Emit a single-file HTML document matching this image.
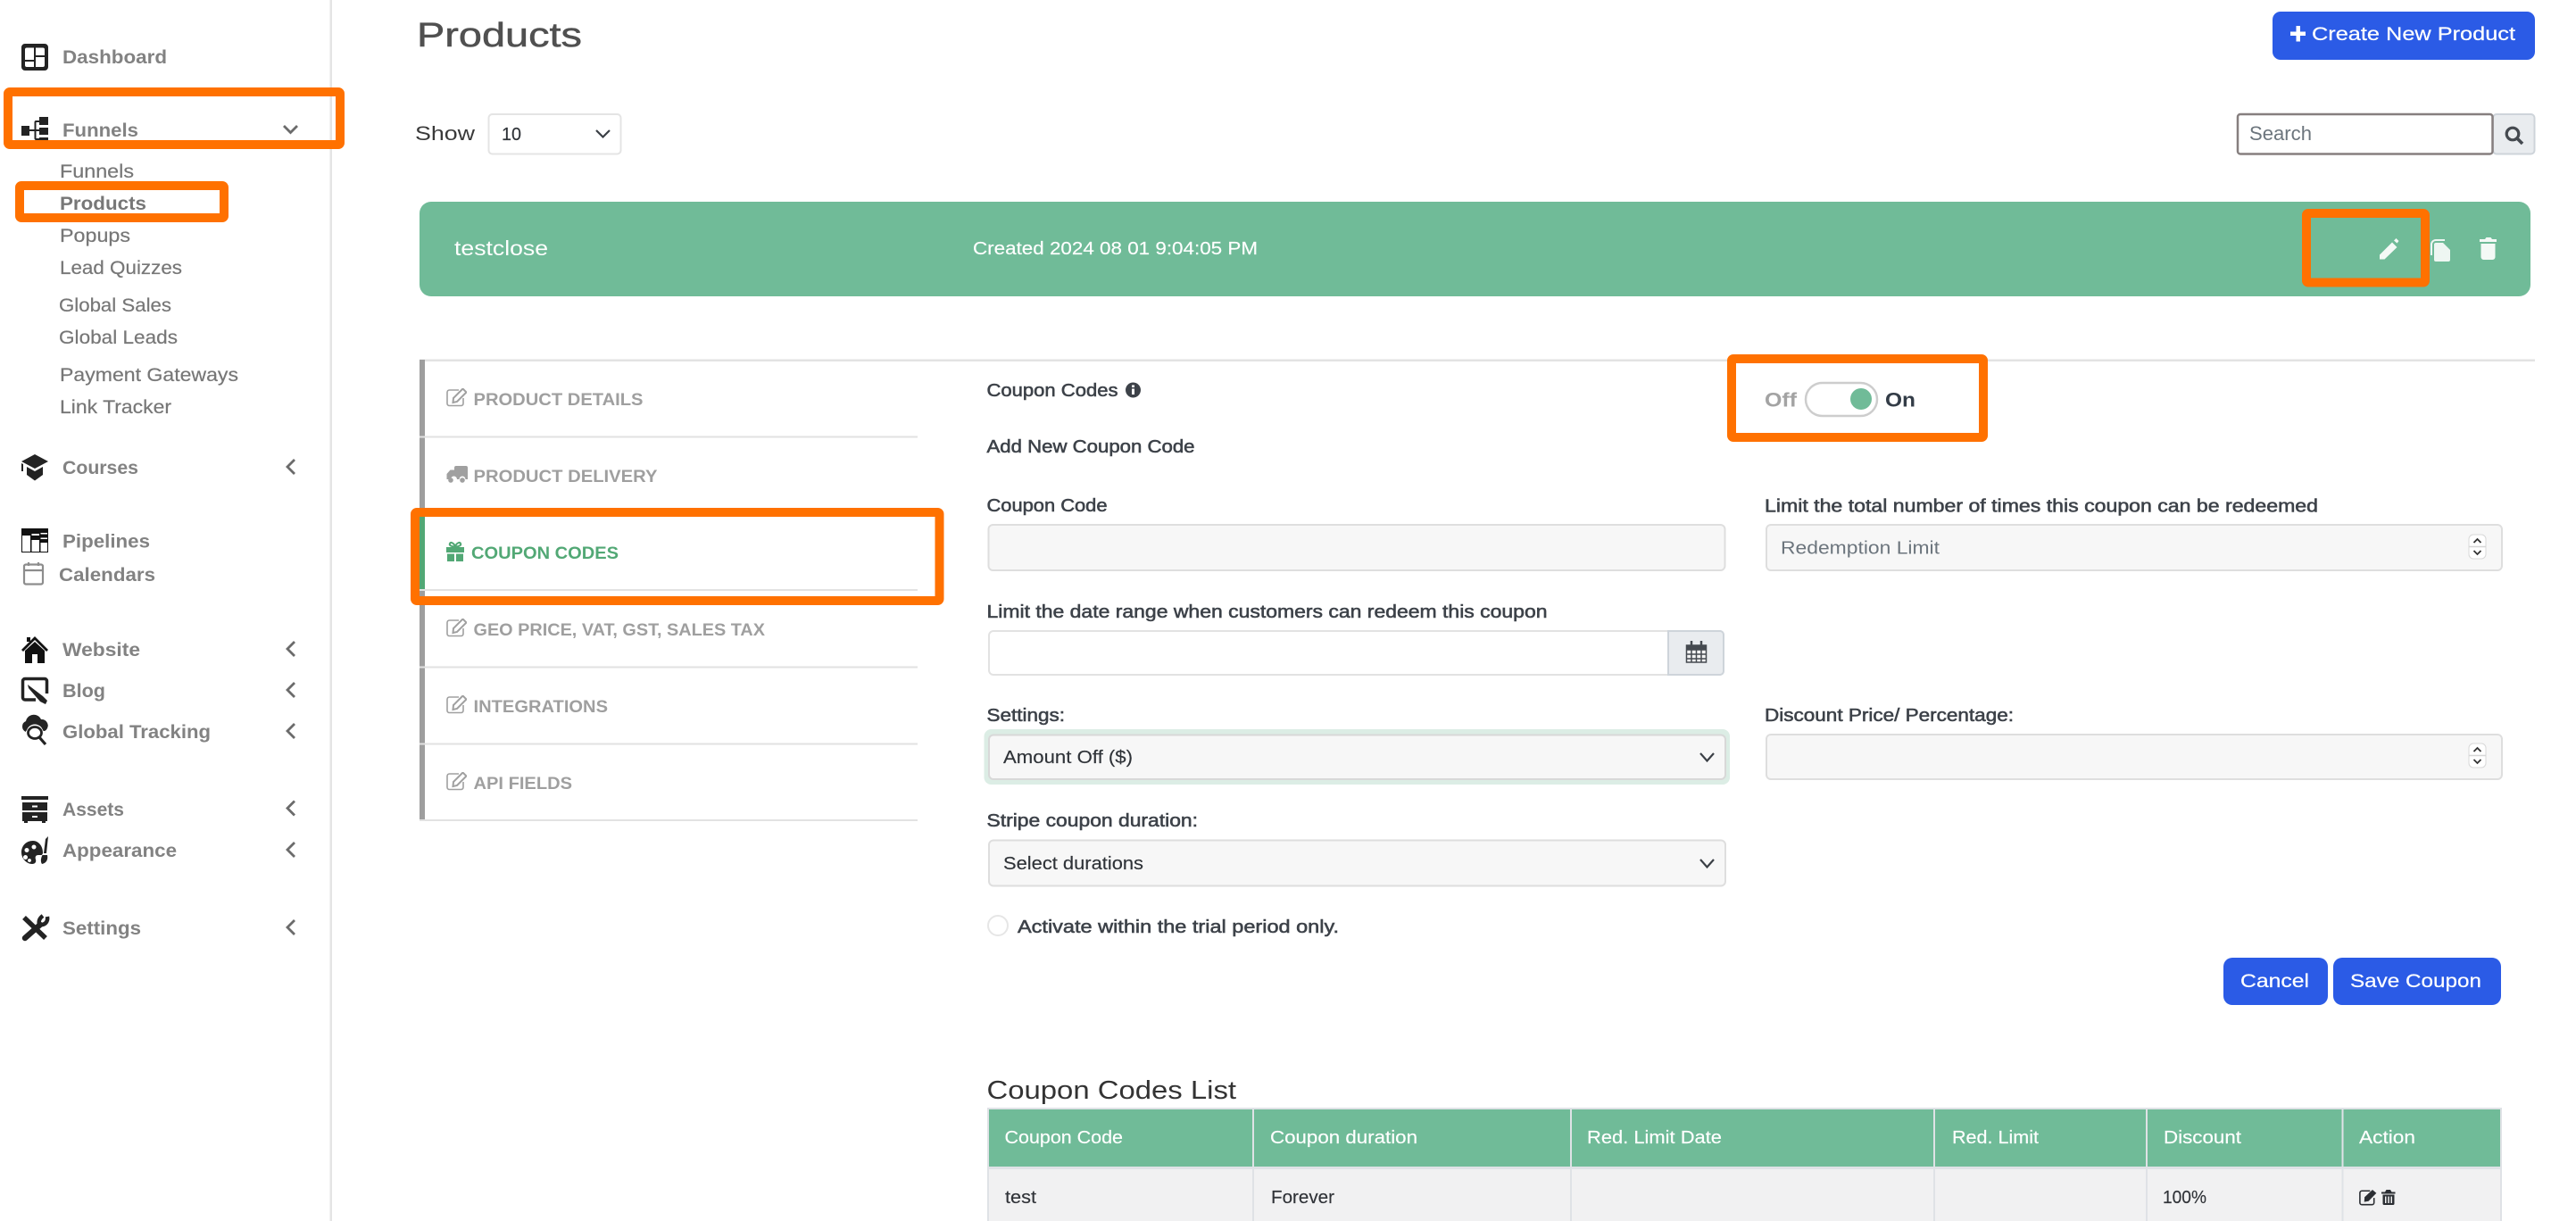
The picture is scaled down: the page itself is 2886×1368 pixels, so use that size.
<!DOCTYPE html>
<html lang="en">
<head>
<meta charset="utf-8">
<title>Products</title>
<style>
html,body{margin:0;padding:0;background:#fff;width:2886px;height:1368px;overflow:hidden}
svg{display:block;position:absolute;left:0;top:0}
text{font-family:"Liberation Sans",Arial,sans-serif;white-space:pre}
.nav{font-size:21px;font-weight:700;fill:#828282}
.sub{font-size:21px;fill:#777;stroke:#777;stroke-width:.2px}
.subb{font-size:21px;font-weight:700;fill:#777}
.tab{font-size:19px;font-weight:700;fill:#9f9f9f}
.lab{font-size:20px;fill:#3d4249;stroke:#3d4249;stroke-width:.55px}
.val{font-size:20px;fill:#2f3338;stroke:#2f3338;stroke-width:.15px}
.wh{font-size:21px;fill:#fff;stroke:#fff;stroke-width:.2px}
.th{font-size:20px;fill:#fff;stroke:#fff;stroke-width:.15px}
.td{font-size:20px;fill:#303338;stroke:#303338;stroke-width:.15px}
</style>
</head>
<body>
<svg width="2886" height="1368" viewBox="0 0 2886 1368" xmlns="http://www.w3.org/2000/svg">
<defs>
<g id="ed">
<path d="M19 11v6a2.500 2.500 0 0 1-2.500 2.500h-13A2.500 2.500 0 0 1 1 17V4.500A2.500 2.500 0 0 1 3.500 2H14" fill="none" stroke="currentColor" stroke-width="1.600"/>
<path d="M8 11 18 1l1 0 3 3v1L12 15l-4.500 1z" fill="none" stroke="currentColor" stroke-width="2"/>
</g>
<g id="edk">
<path d="M19 11v6a2.500 2.500 0 0 1-2.500 2.500h-13A2.500 2.500 0 0 1 1 17V4.500A2.500 2.500 0 0 1 3.500 2H14" fill="none" stroke="currentColor" stroke-width="1.800"/>
<path d="M7 10 17 0.500l5 4.300L12 15l-5.500 1z" fill="currentColor"/>
</g>
<path id="chl" d="M9 0 1 8l8 8" fill="none" stroke="#6b6b6b" stroke-width="2.800"/>
<g id="spin">
<rect x="0" y="0" width="19" height="27" rx="5" fill="#fff" stroke="#d8d8d8"/>
<line x1="0" y1="13.500" x2="19" y2="13.500" stroke="#d6d6d6" stroke-width="1.500"/>
<path d="M5.500 9l4-4 4 4M5.500 18l4 4 4-4" fill="none" stroke="#333" stroke-width="1.800"/>
</g>
</defs>

<!-- sidebar -->
<rect x="369.500" y="0" width="2.500" height="1368" fill="#e4e4e4"/>

<path fill-rule="evenodd" fill="#232323" d="M28 49h22a4 4 0 0 1 4 4v22a4 4 0 0 1-4 4H28a4 4 0 0 1-4-4V53a4 4 0 0 1 4-4zM30 53.500a2 2 0 0 0-2 2V67h10V53.500zM40 53.500V62h10v-6.500a2 2 0 0 0-2-2zM40 64v11h8a2 2 0 0 0 2-2v-9zM28 69v4a2 2 0 0 0 2 2h8v-6z"/>
<text class="nav" x="70" y="71" textLength="117" lengthAdjust="spacingAndGlyphs">Dashboard</text>

<g fill="#232323">
<rect x="24" y="141" width="9" height="11"/>
<rect x="44" y="131" width="10" height="9"/>
<rect x="44" y="143" width="10" height="8"/>
<rect x="44" y="154" width="10" height="6"/>
<path d="M33 145h5.500v-8a2 2 0 0 1 2-2H44v2h-3.500v8H44v2h-3.500v8H44v2h-3.500a2 2 0 0 1-2-2v-8H33z"/>
</g>
<text class="nav" x="70" y="153" textLength="85" lengthAdjust="spacingAndGlyphs">Funnels</text>
<path d="M318 141l7.500 7.500 7.500-7.500" fill="none" stroke="#6b6b6b" stroke-width="2.800"/>

<text class="sub" x="67" y="199" textLength="83" lengthAdjust="spacingAndGlyphs">Funnels</text>
<text class="subb" x="67" y="235" textLength="97" lengthAdjust="spacingAndGlyphs">Products</text>
<text class="sub" x="67" y="271" textLength="79" lengthAdjust="spacingAndGlyphs">Popups</text>
<text class="sub" x="67" y="307" textLength="137" lengthAdjust="spacingAndGlyphs">Lead Quizzes</text>
<text class="sub" x="66" y="349" textLength="126" lengthAdjust="spacingAndGlyphs">Global Sales</text>
<text class="sub" x="66" y="385" textLength="133" lengthAdjust="spacingAndGlyphs">Global Leads</text>
<text class="sub" x="67" y="427" textLength="200" lengthAdjust="spacingAndGlyphs">Payment Gateways</text>
<text class="sub" x="67" y="463" textLength="125" lengthAdjust="spacingAndGlyphs">Link Tracker</text>

<path fill="#232323" d="M39 509l15 8-15 8-15-8zM24 519l2 1v8h-2zM30 523l9 5 9-5v9l-9 6.500-9-6.500z"/>
<text class="nav" x="70" y="531" textLength="85" lengthAdjust="spacingAndGlyphs">Courses</text>
<use href="#chl" x="321" y="515"/>

<g>
<rect x="24.500" y="592.500" width="29" height="26" fill="#fff" stroke="#111" stroke-width="1"/>
<rect x="34" y="592" width="1.500" height="27" fill="#111"/><rect x="44" y="592" width="1.500" height="27" fill="#111"/>
<rect x="25" y="593" width="9" height="7" fill="#111"/><rect x="35.500" y="593" width="8.500" height="5" fill="#111"/><rect x="35.500" y="600" width="8.500" height="5" fill="#111"/>
<rect x="45.500" y="593" width="8" height="4" fill="#111"/><rect x="45.500" y="598.500" width="8" height="4" fill="#111"/><rect x="45.500" y="604" width="8" height="4" fill="#111"/>
</g>
<text class="nav" x="70" y="613.500" textLength="98" lengthAdjust="spacingAndGlyphs">Pipelines</text>

<g fill="none" stroke="#8d8d8d" stroke-width="2.200"><rect x="27" y="632.500" width="21" height="22" rx="2"/><path d="M27 639h21M32 630v4M43 630v4"/></g>
<text class="nav" x="66" y="651" textLength="108" lengthAdjust="spacingAndGlyphs">Calendars</text>

<path fill="#111" d="M39 713l15 15-2 2-13-13-13 13-2-2zM28 729l11-10 11 10v14h-8v-10h-6v10h-8z"/><rect x="30" y="714" width="4" height="5" fill="#111"/>
<text class="nav" x="70" y="735" textLength="87" lengthAdjust="spacingAndGlyphs">Website</text>
<use href="#chl" x="321" y="719"/>

<path fill="none" stroke="#232323" stroke-width="3.500" d="M40 784H28a2.500 2.500 0 0 1-2.500-2.500V763a2.500 2.500 0 0 1 2.500-2.500h22a2.500 2.500 0 0 1 2.500 2.500v14"/>
<path fill="#232323" d="M31 767l17 13 5 5-2 4-6-3-13-15z"/>
<text class="nav" x="70" y="781" textLength="48" lengthAdjust="spacingAndGlyphs">Blog</text>
<use href="#chl" x="321" y="765"/>

<path fill="#232323" d="M29 820a6.500 6.500 0 0 1 0-12 9 9 0 0 1 17-2 7 7 0 0 1 7 10 6 6 0 0 1-3 3l-1 0a13 10 0 0 0-20 0z"/>
<circle cx="39" cy="821" r="9.500" fill="#fff"/>
<ellipse cx="39" cy="821" rx="7.500" ry="6.500" fill="#fff" stroke="#232323" stroke-width="2.800"/>
<path d="M44 826l7 8" stroke="#232323" stroke-width="3.200"/>
<text class="nav" x="70" y="827" textLength="166" lengthAdjust="spacingAndGlyphs">Global Tracking</text>
<use href="#chl" x="321" y="811"/>

<g fill="#232323"><rect x="24" y="892" width="30" height="4"/>
<path fill-rule="evenodd" d="M25 899h28v9H25zM36 902.500v2h6v-2zM25 910h28v10h-2v2h-4v-2H31v2h-4v-2h-2zM36 914v2h6v-2z"/></g>
<text class="nav" x="70" y="914" textLength="69" lengthAdjust="spacingAndGlyphs">Assets</text>
<use href="#chl" x="321" y="897.500"/>

<path fill-rule="evenodd" fill="#232323" d="M37 942c-8 0-13 6-13 13s6 13 12 13c3 0 5-2 4-5-1-3 0-5 3-5h3c1 0 2-1 2-3 0-7-5-13-11-13zM30 950a2.500 2.500 0 1 0 .01 0zM38 946.500a2.500 2.500 0 1 0 .01 0zM28.500 958a2.500 2.500 0 1 0 .01 0zM33 962a2 2 0 1 0 .01 0z"/>
<path fill="#232323" d="M54 937l-2 19h-3l2-16zM47.500 958h5.500c1 5-1 9-6 10-2-3-1-7 .5-10z"/>
<text class="nav" x="70" y="960" textLength="128" lengthAdjust="spacingAndGlyphs">Appearance</text>
<use href="#chl" x="321" y="944"/>

<g fill="none" stroke="#232323">
<path d="M27 1028l24 23" stroke-width="5.500"/>
<path d="M28 1051l17-15" stroke-width="6.500" stroke-linecap="round"/>
<path d="M53 1027c1 6-3 10-9 9-1-4 0-7 4-10" stroke-width="4.500"/>
</g>
<text class="nav" x="70" y="1047" textLength="88" lengthAdjust="spacingAndGlyphs">Settings</text>
<use href="#chl" x="321" y="1031"/>

<!-- sidebar highlight boxes -->
<rect x="9" y="103" width="372" height="59" rx="2" fill="none" stroke="#ff7100" stroke-width="10"/>
<rect x="22" y="208" width="229" height="36" rx="2" fill="none" stroke="#ff7100" stroke-width="10"/>

<!-- header -->
<text x="467" y="52" font-size="38" fill="#505050" stroke="#505050" stroke-width=".5" textLength="185" lengthAdjust="spacingAndGlyphs">Products</text>
<rect x="2546" y="13" width="294" height="54" rx="9" fill="#2b5be6"/>
<path d="M2566 35.500h6.500V29h4.500v6.500h6v4.500h-6v6.500h-4.500V40h-6.500z" fill="#fff"/>
<text class="wh" x="2590" y="45" textLength="228" lengthAdjust="spacingAndGlyphs">Create New Product</text>

<text x="465" y="157" font-size="22" fill="#3a3a3a" textLength="67" lengthAdjust="spacingAndGlyphs">Show</text>
<rect x="547.500" y="128" width="148" height="44.500" rx="4" fill="#fff" stroke="#e4e4e4" stroke-width="2"/>
<text class="val" x="562" y="157" textLength="22" lengthAdjust="spacingAndGlyphs">10</text>
<path d="M668 146l7.500 7.500 7.500-7.500" fill="none" stroke="#3a3f45" stroke-width="2.200"/>

<rect x="2793" y="128" width="46.500" height="44.500" rx="4" fill="#e9ecef" stroke="#ced4da" stroke-width="2"/>
<rect x="2507" y="128" width="285.500" height="44.500" rx="3" fill="#fff" stroke="#867f7f" stroke-width="2.500"/>
<text x="2520" y="157" font-size="22" fill="#6c757d" textLength="70" lengthAdjust="spacingAndGlyphs">Search</text>
<circle cx="2815" cy="150" r="6.800" fill="none" stroke="#454a50" stroke-width="3.200"/>
<path d="M2820 155l6 6" stroke="#454a50" stroke-width="3.600"/>

<!-- product bar -->
<rect x="470" y="226" width="2365" height="106" rx="13" fill="#70bb98"/>
<text x="509" y="286" font-size="23" fill="#fff" textLength="105" lengthAdjust="spacingAndGlyphs">testclose</text>
<text x="1090" y="285" font-size="20" fill="#fff" stroke="#fff" stroke-width=".15" textLength="319" lengthAdjust="spacingAndGlyphs">Created 2024 08 01 9:04:05 PM</text>
<path d="M2666 285.500l14-14 5.500 5.500-14 13.500h-5.500zM2682 269.500l2.500-2.500 3 3-2 2.500z" fill="#f4f9f6"/>
<path d="M2729 270h10v-2h-10a6 6 0 0 0-6 6v12h2v-12a4 4 0 0 1 4-4zM2729 272h8l8 8v11a2 2 0 0 1-2 2h-14a2 2 0 0 1-2-2v-17a2 2 0 0 1 2-2z" fill="#eef6f2"/>
<path d="M2778 268h6l1.500-2h5l1.500 2h5v3h-19zM2779.500 273h16v15a3 3 0 0 1-3 3h-10a3 3 0 0 1-3-3z" fill="#f4f9f6"/>
<rect x="2584" y="239" width="133" height="77.500" rx="2" fill="none" stroke="#ff7100" stroke-width="10"/>

<!-- tab panel -->
<rect x="470" y="402.500" width="2370" height="2.500" fill="#e3e3e3"/>
<rect x="470" y="403" width="6" height="516" fill="#9e9e9e"/>
<g fill="#e2e2e2">
<rect x="470" y="488.500" width="558" height="2"/>
<rect x="470" y="574.500" width="558" height="2"/>
<rect x="470" y="660" width="558" height="2"/>
<rect x="470" y="746.500" width="558" height="2"/>
<rect x="470" y="832.500" width="558" height="2"/>
<rect x="470" y="918" width="558" height="2"/>
</g>
<rect x="470" y="575" width="6" height="85" fill="#52a875"/>

<g color="#a0a0a0">
<use href="#ed" x="500" y="435"/>
<use href="#ed" x="500" y="693"/>
<use href="#ed" x="500" y="779"/>
<use href="#ed" x="500" y="865"/>
</g>
<path fill="#a0a0a0" d="M509 524a2 2 0 0 1 2-2h11a2 2 0 0 1 2 2v13h-2.500a3.500 3.500 0 0 0-7 0h-2.500a3.500 3.500 0 0 0-7 0h-4.500v-6l4-4.500h4.500z"/>
<circle cx="505" cy="538" r="2.800" fill="#a0a0a0"/><circle cx="518" cy="538" r="2.800" fill="#a0a0a0"/>
<text class="tab" x="530.500" y="454" textLength="190" lengthAdjust="spacingAndGlyphs">PRODUCT DETAILS</text>
<text class="tab" x="530.500" y="540" textLength="206" lengthAdjust="spacingAndGlyphs">PRODUCT DELIVERY</text>
<path fill="#52a875" d="M500 613h20v6h-20zM501 620.500h8v8.500h-8zM511 620.500h8v8.500h-8z"/>
<path fill="none" stroke="#52a875" stroke-width="2" d="M510 612c-2-4-5-5-6-3s2 3.500 6 3.500c4 0 7-1.500 6-3.500s-4-1-6 3z"/>
<text class="tab" style="fill:#52a875" x="528" y="626" textLength="165" lengthAdjust="spacingAndGlyphs">COUPON CODES</text>
<text class="tab" x="530.500" y="712" textLength="326.500" lengthAdjust="spacingAndGlyphs">GEO PRICE, VAT, GST, SALES TAX</text>
<text class="tab" x="530.500" y="798" textLength="150.500" lengthAdjust="spacingAndGlyphs">INTEGRATIONS</text>
<text class="tab" x="530.500" y="884" textLength="110.500" lengthAdjust="spacingAndGlyphs">API FIELDS</text>
<rect x="465" y="574" width="587.500" height="99" rx="2" fill="none" stroke="#ff7100" stroke-width="10"/>

<!-- form left -->
<text class="lab" x="1105.500" y="444" textLength="147" lengthAdjust="spacingAndGlyphs">Coupon Codes</text>
<circle cx="1269.500" cy="437" r="8.500" fill="#3d4249"/>
<rect x="1268" y="435.500" width="3" height="6.500" fill="#fff"/><rect x="1268" y="431.500" width="3" height="2.500" fill="#fff"/>
<text class="lab" x="1105.500" y="507" textLength="233" lengthAdjust="spacingAndGlyphs">Add New Coupon Code</text>
<text class="lab" x="1105.500" y="573" textLength="135" lengthAdjust="spacingAndGlyphs">Coupon Code</text>
<rect x="1107.500" y="588" width="825" height="51" rx="5" fill="#f7f7f7" stroke="#dedede" stroke-width="2"/>
<text class="lab" x="1105.500" y="692" textLength="628" lengthAdjust="spacingAndGlyphs">Limit the date range when customers can redeem this coupon</text>
<rect x="1108" y="707" width="823" height="49" rx="5" fill="#fff" stroke="#e2e2e2" stroke-width="2"/>
<path d="M1869 707h58a4 4 0 0 1 4 4v41a4 4 0 0 1-4 4h-58z" fill="#e9ecef" stroke="#ced4da" stroke-width="2"/>
<g fill="none" stroke="#454a50" stroke-width="1.500"><rect x="1889.500" y="723" width="22" height="19" fill="#f4f4f4"/><path d="M1889.500 728h22M1889.500 733h22M1889.500 738h22M1895 723v19M1900.500 723v19M1906 723v19"/></g>
<path d="M1889.500 723h22v5h-22z" fill="#454a50"/><path d="M1895 718v7M1906 718v7" stroke="#454a50" stroke-width="2.500"/>

<text class="lab" x="1105.500" y="808" textLength="87.500" lengthAdjust="spacingAndGlyphs">Settings:</text>
<rect x="1102.500" y="817" width="835.500" height="62" rx="8" fill="#dcede5"/>
<rect x="1108" y="823.500" width="825" height="49.500" rx="5" fill="#f7f7f7" stroke="#d8d8d8" stroke-width="2"/>
<text class="val" x="1124" y="855" textLength="145" lengthAdjust="spacingAndGlyphs">Amount Off ($)</text>
<path d="M1905 844l7.500 8.500 7.500-8.500" fill="none" stroke="#3a3f45" stroke-width="2.200"/>

<text class="lab" x="1105.500" y="926" textLength="236.500" lengthAdjust="spacingAndGlyphs">Stripe coupon duration:</text>
<rect x="1108" y="941.500" width="825" height="51" rx="5" fill="#f7f7f7" stroke="#dedede" stroke-width="2"/>
<text class="val" x="1124" y="974" textLength="157" lengthAdjust="spacingAndGlyphs">Select durations</text>
<path d="M1905 963l7.500 8.500 7.500-8.500" fill="none" stroke="#3a3f45" stroke-width="2.200"/>

<circle cx="1118" cy="1037" r="11" fill="#fff" stroke="#e6e6e6" stroke-width="2"/>
<text class="lab" x="1140" y="1045" textLength="360" lengthAdjust="spacingAndGlyphs">Activate within the trial period only.</text>

<!-- form right -->
<text font-size="22" font-weight="700" fill="#a3a3a3" x="1977" y="455.500" textLength="36" lengthAdjust="spacingAndGlyphs">Off</text>
<rect x="2023" y="429" width="80" height="37" rx="18.500" fill="#fff" stroke="#cdcdcd" stroke-width="2.500"/>
<circle cx="2085" cy="447" r="12" fill="#70bb98"/>
<text font-size="22" font-weight="700" fill="#333c47" x="2112" y="455.500" textLength="34" lengthAdjust="spacingAndGlyphs">On</text>
<rect x="1940" y="402" width="282" height="88" rx="2" fill="none" stroke="#ff7100" stroke-width="10"/>

<text class="lab" x="1977" y="573.500" textLength="620" lengthAdjust="spacingAndGlyphs">Limit the total number of times this coupon can be redeemed</text>
<rect x="1979" y="588" width="824" height="51" rx="5" fill="#f7f7f7" stroke="#dedede" stroke-width="2"/>
<text x="1995" y="620.500" font-size="20" fill="#6c757d" textLength="178" lengthAdjust="spacingAndGlyphs">Redemption Limit</text>
<use href="#spin" x="2766" y="599"/>

<text class="lab" x="1977" y="808" textLength="279" lengthAdjust="spacingAndGlyphs">Discount Price/ Percentage:</text>
<rect x="1979" y="823" width="824" height="50" rx="5" fill="#f7f7f7" stroke="#dedede" stroke-width="2"/>
<use href="#spin" x="2766" y="833"/>

<rect x="2491" y="1073" width="117" height="53" rx="10" fill="#2b5be6"/>
<rect x="2614" y="1073" width="188" height="53" rx="10" fill="#2b5be6"/>
<text class="wh" x="2510" y="1106" textLength="77" lengthAdjust="spacingAndGlyphs">Cancel</text>
<text class="wh" x="2633" y="1106" textLength="147" lengthAdjust="spacingAndGlyphs">Save Coupon</text>

<!-- table -->
<text x="1105.500" y="1231" font-size="29" fill="#333" textLength="279.500" lengthAdjust="spacingAndGlyphs">Coupon Codes List</text>
<rect x="1106" y="1241" width="1697" height="127" fill="#dfe2e6"/>
<rect x="1108" y="1243" width="1693" height="64" fill="#70bb98"/>
<rect x="1108" y="1310" width="1693" height="58" fill="#f1f1f2"/>
<g fill="#dfe2e6">
<rect x="1403" y="1243" width="2" height="125"/>
<rect x="1759" y="1243" width="2" height="125"/>
<rect x="2166" y="1243" width="2" height="125"/>
<rect x="2404" y="1243" width="2" height="125"/>
<rect x="2623.500" y="1243" width="2" height="125"/>
</g>
<text class="th" x="1125.500" y="1281" textLength="132.500" lengthAdjust="spacingAndGlyphs">Coupon Code</text>
<text class="th" x="1423" y="1281" textLength="165" lengthAdjust="spacingAndGlyphs">Coupon duration</text>
<text class="th" x="1778" y="1281" textLength="151" lengthAdjust="spacingAndGlyphs">Red. Limit Date</text>
<text class="th" x="2187" y="1281" textLength="97" lengthAdjust="spacingAndGlyphs">Red. Limit</text>
<text class="th" x="2424" y="1281" textLength="87" lengthAdjust="spacingAndGlyphs">Discount</text>
<text class="th" x="2643" y="1281" textLength="63" lengthAdjust="spacingAndGlyphs">Action</text>
<text class="td" x="1126" y="1348" textLength="35" lengthAdjust="spacingAndGlyphs">test</text>
<text class="td" x="1424" y="1348" textLength="71" lengthAdjust="spacingAndGlyphs">Forever</text>
<text class="td" x="2423" y="1348" textLength="49" lengthAdjust="spacingAndGlyphs">100%</text>
<g color="#2b2e33"><use href="#edk" transform="translate(2643 1332.500) scale(.88)"/></g>
<path fill-rule="evenodd" fill="#2b2e33" d="M2668 1335.500h4l1.500-2.500h4.500l1.500 2.500h4v2h-15.500zM2669.500 1338.500h13v10a1.500 1.500 0 0 1-1.500 1.500h-10a1.500 1.500 0 0 1-1.500-1.500zM2672 1340.500v7.500h1.500v-7.500zM2675.300 1340.500v7.500h1.500v-7.500zM2678.500 1340.500v7.500h1.500v-7.500z"/>
</svg>
</body>
</html>
